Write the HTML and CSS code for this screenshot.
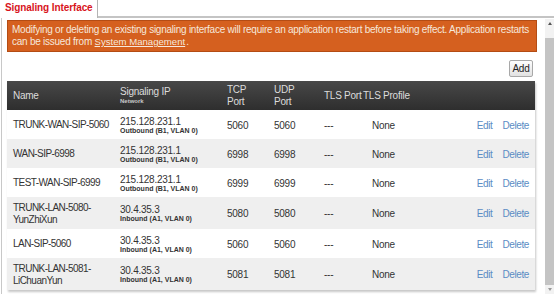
FILE: index.html
```
<!DOCTYPE html>
<html lang="en">
<head>
  <meta charset="UTF-8">
  <title>Signaling Interface</title>
  <link rel="stylesheet" href="styles.css">
</head>
<body>

  <div class="tabs">
    <div class="tab">Signaling Interface</div>
    <div class="tab-fill"></div>
  </div>

  <div class="panel">
    <div class="main">
      <div class="notice">
        <span>Modifying or deleting an existing signaling interface will require an application restart before taking effect. Application restarts</span><br>
        <span>can be issued from</span> <a href="#">System Management</a><span class="dot">.</span>
      </div>

      <div class="toolbar">
        <button class="btn">Add</button>
      </div>

      <table class="grid">
        <colgroup>
          <col class="c-name">
          <col class="c-ip">
          <col class="c-tcp">
          <col class="c-udp">
          <col class="c-tls">
          <col>
          <col class="c-act">
        </colgroup>
        <thead>
          <tr>
            <th>Name</th>
            <th>Signaling IP<span class="sub">Network</span></th>
            <th>TCP<br>Port</th>
            <th>UDP<br>Port</th>
            <th>TLS Port</th>
            <th>TLS Profile</th>
            <th></th>
          </tr>
        </thead>
        <tbody>
          <tr>
            <td class="name">TRUNK-WAN-SIP-5060</td>
            <td>215.128.231.1<span class="sub">Outbound (B1, VLAN 0)</span></td>
            <td>5060</td>
            <td>5060</td>
            <td>---</td>
            <td class="profile">None</td>
            <td class="act"><a href="#">Edit</a><a href="#">Delete</a></td>
          </tr>
          <tr>
            <td class="name">WAN-SIP-6998</td>
            <td>215.128.231.1<span class="sub">Outbound (B1, VLAN 0)</span></td>
            <td>6998</td>
            <td>6998</td>
            <td>---</td>
            <td class="profile">None</td>
            <td class="act"><a href="#">Edit</a><a href="#">Delete</a></td>
          </tr>
          <tr>
            <td class="name">TEST-WAN-SIP-6999</td>
            <td>215.128.231.1<span class="sub">Outbound (B1, VLAN 0)</span></td>
            <td>6999</td>
            <td>6999</td>
            <td>---</td>
            <td class="profile">None</td>
            <td class="act"><a href="#">Edit</a><a href="#">Delete</a></td>
          </tr>
          <tr class="tall">
            <td class="name">TRUNK-LAN-5080-<br>YunZhiXun</td>
            <td>30.4.35.3<span class="sub">Inbound (A1, VLAN 0)</span></td>
            <td>5080</td>
            <td>5080</td>
            <td>---</td>
            <td class="profile">None</td>
            <td class="act"><a href="#">Edit</a><a href="#">Delete</a></td>
          </tr>
          <tr>
            <td class="name">LAN-SIP-5060</td>
            <td>30.4.35.3<span class="sub">Inbound (A1, VLAN 0)</span></td>
            <td>5060</td>
            <td>5060</td>
            <td>---</td>
            <td class="profile">None</td>
            <td class="act"><a href="#">Edit</a><a href="#">Delete</a></td>
          </tr>
          <tr class="tall">
            <td class="name">TRUNK-LAN-5081-<br>LiChuanYun</td>
            <td>30.4.35.3<span class="sub">Inbound (A1, VLAN 0)</span></td>
            <td>5081</td>
            <td>5081</td>
            <td>---</td>
            <td class="profile">None</td>
            <td class="act"><a href="#">Edit</a><a href="#">Delete</a></td>
          </tr>
        </tbody>
      </table>
    </div>

    <div class="scrollbar">
      <div class="arrow up"></div>
      <div class="thumb"></div>
      <div class="arrow down"></div>
    </div>
  </div>

</body>
</html>
```
FILE: styles.css
```
html, body {
  margin: 0;
  height: 100%;
  overflow: hidden;
}

body {
  font-family: 'Liberation Sans', Arial, sans-serif;
  font-size: 10px;
  letter-spacing: -0.25px;
  color: #333;
  background: #fff;
  display: flex;
  flex-direction: column;
}

.tabs {
  display: flex;
  height: 18px;
  flex-shrink: 0;
}

.tab {
  width: 92px;
  padding-left: 5px;
  border-right: 1px solid #b4b4b4;
  color: #d8141c;
  font-weight: bold;
  font-size: 10px;
  letter-spacing: -0.1px;
  line-height: 16px;
}

.tab-fill {
  flex: 1;
  border-bottom: 2px solid #c4c4c4;
}

.panel {
  flex: 1;
  display: flex;
  min-height: 0;
}

.main {
  flex: 1;
  min-width: 0;
  border-left: 1px solid #c8c8c8;
  margin-left: 1px;
  padding: 2px 8px 0 5px;
}

.notice {
  background-color: #d5601f;
  border: 1px solid #b44c14;
  color: #f6e8dc;
  line-height: 12px;
  padding: 3px 4px 3px 4px;
  white-space: nowrap;
}

.notice a {
  color: #f6e8dc;
  letter-spacing: 0;
  font-size: 9.6px;
}

.notice .dot {
  letter-spacing: 0;
  margin-left: 1px;
}

.toolbar {
  display: flex;
  justify-content: flex-end;
  padding: 8px 4px 4px 0;
}

.btn {
  font-family: 'Liberation Sans', Arial, sans-serif;
  font-size: 10px;
  letter-spacing: -0.2px;
  color: #222;
  height: 17px;
  width: 24px;
  padding: 0;
  background: linear-gradient(#fdfdfd, #e2e2e2);
  border: 1px solid #a8a8a8;
  border-radius: 2px;
}

.grid {
  width: 528px;
  border-collapse: collapse;
  table-layout: fixed;
  box-shadow: 1px 2px 2px rgba(0, 0, 0, 0.22);
}

.grid .c-name { width: 107px; }
.grid .c-ip { width: 107px; }
.grid .c-tcp { width: 47px; }
.grid .c-udp { width: 50px; }
.grid .c-tls { width: 39px; }
.grid .c-act { width: 65px; }

.grid th {
  background: linear-gradient(#484848, #2e2e2e);
  color: #dcdcdc;
  font-weight: normal;
  text-align: left;
  line-height: 12px;
  height: 29px;
  padding: 0 0 0 6px;
  vertical-align: middle;
  white-space: nowrap;
}

.grid th .sub {
  display: block;
  font-size: 6px;
  line-height: 7px;
  font-weight: bold;
  letter-spacing: 0;
  color: #c8c8c8;
}

.grid td {
  height: 28px;
  padding: 1px 0 0 6px;
  line-height: 11px;
  vertical-align: middle;
  white-space: nowrap;
}

.grid td.name {
  letter-spacing: -0.55px;
  line-height: 12px;
}

.grid td.profile {
  padding-left: 15px;
}

.grid tr.tall td {
  height: 31px;
}

.grid td .sub {
  display: block;
  font-size: 7px;
  line-height: 8px;
  font-weight: bold;
  letter-spacing: 0;
  color: #333;
}

.grid tbody tr:nth-child(even) td {
  background-color: #efefef;
}

.grid td.act {
  text-align: right;
  padding: 1px 6px 0 0;
  letter-spacing: -0.4px;
}

.grid td.act a {
  color: #5a8cc4;
  text-decoration: none;
}

.grid td.act a + a {
  margin-left: 10px;
}

.scrollbar {
  width: 9px;
  flex-shrink: 0;
  margin-top: 1px;
  background: #f2f2f2;
  display: flex;
  flex-direction: column;
  align-items: center;
}

.arrow {
  width: 0;
  height: 0;
  border-left: 2px solid transparent;
  border-right: 2px solid transparent;
  margin: 3px 0;
}

.arrow.up {
  border-bottom: 3px solid #555;
}

.arrow.down {
  border-top: 3px solid #999;
}

.thumb {
  width: 9px;
  flex: 1;
  margin-top: 10px;
  background: #c4c4c4;
}
```
